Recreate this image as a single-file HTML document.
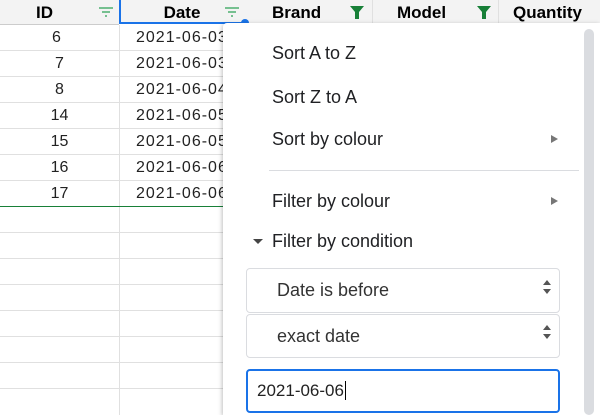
<!DOCTYPE html><html><head><style>
body{margin:0;width:600px;height:415px;overflow:hidden;background:#fff;font-family:"Liberation Sans",sans-serif;position:relative}
.a{position:absolute}
.hd{top:0;height:24px;background:#f3f3f3;border-bottom:1px solid #ccc;font-weight:bold;font-size:17px;line-height:26px;text-align:center;color:#000}
.vl{width:1px;background:#e0e0e0}
.hl{height:1px;background:#e0e0e0;left:0;width:243px}
.c{font-size:16px;color:#222;line-height:26px}
.mi{left:272px;font-size:18px;color:#202124}
.box{left:246px;width:312px;border:1px solid #dadce0;border-radius:4px;font-size:18px;color:#333}
</style></head><body>
<div class="a hd" style="left:0;width:119px;text-indent:-30px">ID</div>
<div class="a hd" style="left:119px;width:122px;height:22px;border:2px solid #1a73e8;border-top:0;line-height:26px">Date</div>
<div class="a hd" style="left:243px;width:129px;text-align:left;text-indent:29px">Brand</div>
<div class="a hd" style="left:373px;width:125px;text-align:left;text-indent:24px">Model</div>
<div class="a hd" style="left:499px;width:101px;text-align:left;text-indent:14px">Quantity</div>
<div class="a vl" style="left:372px;top:0;height:24px"></div>
<div class="a vl" style="left:498px;top:0;height:24px"></div>
<svg class="a" style="left:97px;top:6px" width="18" height="12"><path d="M2 2h14M5 6h8M8 10h2" stroke="#4caf70" stroke-width="1.6"/></svg>
<svg class="a" style="left:223px;top:6px" width="18" height="12"><path d="M2 2h14M5 6h8M8 10h2" stroke="#4caf70" stroke-width="1.6"/></svg>
<svg class="a" style="left:349px;top:5px" width="16" height="16"><path d="M1 1h14l-5 6v7h-4v-7z" fill="#188038"/></svg>
<svg class="a" style="left:476px;top:5px" width="16" height="16"><path d="M1 1h14l-5 6v7h-4v-7z" fill="#188038"/></svg>
<div class="a vl" style="left:119px;top:25px;height:390px"></div>
<div class="a hl" style="top:50px"></div><div class="a hl" style="top:76px"></div><div class="a hl" style="top:102px"></div><div class="a hl" style="top:128px"></div><div class="a hl" style="top:154px"></div><div class="a hl" style="top:180px"></div>
<div class="a" style="left:0;top:206px;width:243px;height:1px;background:#188038"></div>
<div class="a hl" style="top:232px"></div><div class="a hl" style="top:258px"></div><div class="a hl" style="top:284px"></div><div class="a hl" style="top:310px"></div><div class="a hl" style="top:336px"></div><div class="a hl" style="top:362px"></div><div class="a hl" style="top:388px"></div>
<div class="a c" style="left:0;top:25px;width:119px;text-align:center;text-indent:-6px">6<br>7<br>8<br>14<br>15<br>16<br>17</div>
<div class="a c" style="left:136px;top:25px;letter-spacing:1px">2021-06-03<br>2021-06-03<br>2021-06-04<br>2021-06-05<br>2021-06-05<br>2021-06-06<br>2021-06-06</div>
<div class="a" style="left:241px;top:19px;width:8px;height:8px;border-radius:50%;background:#1a73e8"></div>
<div class="a" style="left:223px;top:23px;width:377px;height:392px;background:#fff;border-radius:4px 0 0 0;box-shadow:-1px 1px 4px rgba(0,0,0,.25)"></div>
<div class="a" style="left:584px;top:29px;width:10px;height:386px;background:#dadce0;border-radius:5px"></div>
<div class="a mi" style="top:43px">Sort A to Z</div>
<div class="a mi" style="top:87px">Sort Z to A</div>
<div class="a mi" style="top:129px">Sort by colour</div>
<div class="a" style="left:551px;top:135px;width:0;height:0;border-left:7px solid #777;border-top:4px solid transparent;border-bottom:4px solid transparent"></div>
<div class="a" style="left:269px;top:170px;width:310px;height:1px;background:#dadce0"></div>
<div class="a mi" style="top:191px">Filter by colour</div>
<div class="a" style="left:551px;top:197px;width:0;height:0;border-left:7px solid #777;border-top:4px solid transparent;border-bottom:4px solid transparent"></div>
<div class="a" style="left:253px;top:239px;width:0;height:0;border-top:5px solid #444;border-left:5px solid transparent;border-right:5px solid transparent"></div>
<div class="a mi" style="top:231px">Filter by condition</div>
<div class="a box" style="top:268px;height:43px;line-height:43px;text-indent:30px">Date is before</div>
<div class="a box" style="top:314px;height:42px;line-height:42px;text-indent:30px">exact date</div>
<svg class="a" style="left:542px;top:279px" width="10" height="16"><path d="M1 6l4-5 4 5zM1 10l4 5 4-5z" fill="#555"/></svg>
<svg class="a" style="left:542px;top:324px" width="10" height="16"><path d="M1 6l4-5 4 5zM1 10l4 5 4-5z" fill="#555"/></svg>
<div class="a" style="left:246px;top:369px;width:310px;height:40px;border:2px solid #1a73e8;border-radius:4px;font-size:17px;line-height:40px;text-indent:9px;color:#222">2021-06-06<span style="border-left:1px solid #000;margin-left:1px"></span></div>
</body></html>
